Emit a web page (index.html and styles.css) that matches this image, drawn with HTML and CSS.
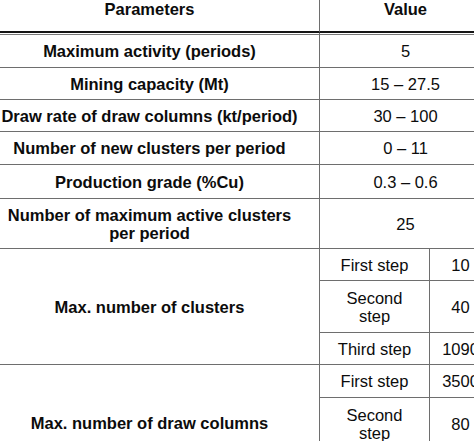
FILE: index.html
```html
<!DOCTYPE html>
<html>
<head>
<meta charset="utf-8">
<link rel="stylesheet" href="styles.css">
</head>
<body>
<div class="sheet">
  <div class="cell head label">Parameters</div>
  <div class="cell head value span2">Value</div>

  <div class="cell label first">Maximum activity (periods)</div>
  <div class="cell value span2 first">5</div>

  <div class="cell label">Mining capacity (Mt)</div>
  <div class="cell value span2">15 – 27.5</div>

  <div class="cell label">Draw rate of draw columns (kt/period)</div>
  <div class="cell value span2">30 – 100</div>

  <div class="cell label">Number of new clusters per period</div>
  <div class="cell value span2">0 – 11</div>

  <div class="cell label">Production grade (%Cu)</div>
  <div class="cell value span2">0.3 – 0.6</div>

  <div class="cell label">Number of maximum active clusters per period</div>
  <div class="cell value span2">25</div>

  <div class="cell label group g1">Max. number of clusters</div>
  <div class="cell step">First step</div>
  <div class="cell num">10</div>
  <div class="cell step">Second step</div>
  <div class="cell num">40</div>
  <div class="cell step">Third step</div>
  <div class="cell num">1090</div>

  <div class="cell label group g2">Max. number of draw columns</div>
  <div class="cell step">First step</div>
  <div class="cell num">3500</div>
  <div class="cell step">Second step</div>
  <div class="cell num">80</div>
  <div class="cell step">Third step</div>
  <div class="cell num">100</div>
</div>
</body>
</html>
```

FILE: styles.css
```css
html, body {
  margin: 0;
  padding: 0;
  background: #fff;
  overflow: hidden;
}

body {
  width: 474px;
  height: 441px;
}

.sheet {
  display: grid;
  grid-template-columns: 340px 110px 62px;
  grid-template-rows: 45px 35px 32px 32px 33px 34px 50px 32px 52px 32px 33px 52px 32px;
  margin-left: -20px;
  margin-top: -12px;
  width: 512px;
  font-family: "Liberation Sans", Arial, sans-serif;
  font-size: 16.5px;
  color: #0c0c0c;
}

.cell {
  display: flex;
  align-items: center;
  justify-content: center;
  text-align: center;
  box-sizing: border-box;
  border-right: 1px solid #6e6e6e;
  border-bottom: 1px solid #6e6e6e;
  line-height: 18px;
}

.label {
  grid-column: 1;
  font-weight: bold;
  padding: 0 20px 0 20px;
}

.span2 {
  grid-column: 2 / span 2;
}

.head {
  border-bottom: 2px solid #151515;
  padding-bottom: 2px;
  font-weight: bold;
}

.first {
  box-shadow: inset 0 1px 0 #fff, inset 0 2px 0 #7a7a7a;
  padding-top: 2px;
}

.group {
  grid-row: span 3;
}

.step {
  grid-column: 2;
  padding: 0 12px;
}

.num {
  grid-column: 3;
}
```
